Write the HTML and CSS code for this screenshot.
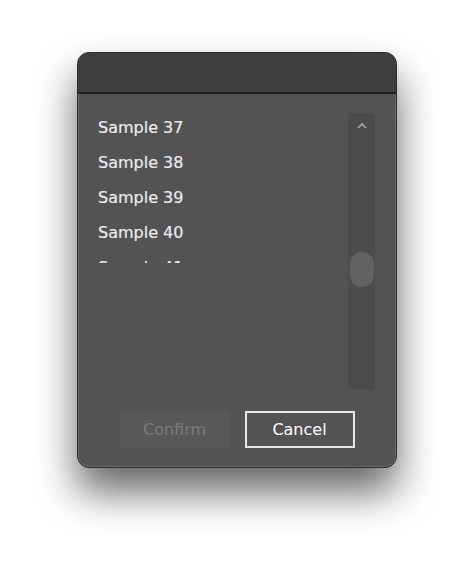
FILE: index.html
```html
<!DOCTYPE html>
<html>
<head>
<meta charset="utf-8">
<link rel="stylesheet" href="styles.css">
</head>
<body>
<div class="stage">
  <div class="dialog">
    <div class="header"></div>
    <div class="content">
      <div class="row">
        <ul class="list">
          <li>Sample 37</li>
          <li>Sample 38</li>
          <li>Sample 39</li>
          <li>Sample 40</li>
          <li>Sample 41</li>
        </ul>
        <div class="track">
          <svg class="chev" width="12" height="8" viewBox="0 0 12 8"><path d="M2 6 L6 2 L10 6" fill="none" stroke="#a8a8a8" stroke-width="1.6"/></svg>
          <div class="thumb"></div>
        </div>
      </div>
      <div class="buttons">
        <button class="btn confirm" disabled>Confirm</button>
        <button class="btn cancel">Cancel</button>
      </div>
    </div>
  </div>
</div>
</body>
</html>
```
FILE: styles.css
```css
html, body {
  margin: 0;
  padding: 0;
  background: #ffffff;
  font-family: "DejaVu Sans", sans-serif;
}
.stage {
  display: flex;
  justify-content: center;
  align-items: flex-start;
  padding-top: 52px;
  min-height: 100vh;
  box-sizing: border-box;
}
.dialog {
  width: 320px;
  height: 416px;
  box-sizing: border-box;
  background: #535353;
  border: 1px solid #2c2c2c;
  border-radius: 12px;
  box-shadow: inset 0 0 0 1px #6a6a6a, 0 24px 40px rgba(0, 0, 0, 0.6);
  overflow: hidden;
  display: flex;
  flex-direction: column;
}
.header {
  height: 39px;
  background: #3e3e3e;
  border-bottom: 2px solid #1f1f1f;
  flex: none;
}
.content {
  flex: 1;
  display: flex;
  flex-direction: column;
  padding: 19px 21px 20px 20px;
}
.row {
  display: flex;
  align-items: flex-start;
}
.list {
  list-style: none;
  margin: -3px 0 0 0;
  padding: 0;
  flex: 1;
  height: 153px;
  overflow: hidden;
}
.list li {
  height: 35px;
  line-height: 35px;
  font-size: 16px;
  color: #ececec;
  -webkit-text-stroke: 0.2px #ececec;
}
.track {
  width: 27px;
  height: 276px;
  background: #4c4c4c;
  position: relative;
  display: flex;
  flex-direction: column;
  align-items: center;
}
.chev {
  margin-top: 9px;
}
.thumb {
  position: absolute;
  left: 2px;
  top: 139px;
  width: 24px;
  height: 35px;
  border-radius: 12px;
  background: #626262;
}
.buttons {
  margin-top: 22px;
  display: flex;
  justify-content: center;
  gap: 15px;
  padding-left: 1px;
}
.btn {
  width: 110px;
  height: 37px;
  box-sizing: border-box;
  font-family: "DejaVu Sans", sans-serif;
  font-size: 16px;
  padding: 0;
}
.confirm {
  background: #585858;
  border: none;
  color: #7c7c7c;
}
.cancel {
  background: transparent;
  border: 2px solid #e6e6e6;
  color: #ffffff;
}
```
